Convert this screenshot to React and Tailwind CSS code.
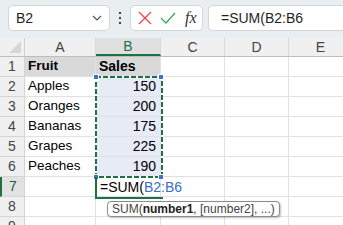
import React from 'react'

const cols = ['A', 'B', 'C', 'D', 'E']
const widths = ['w-[71px]', 'w-[65px]', 'w-[64px]', 'w-[64px]', 'w-[64px]']

const rows = [
  { n: 1, a: 'Fruit', b: 'Sales', head: true },
  { n: 2, a: 'Apples', b: '150' },
  { n: 3, a: 'Oranges', b: '200' },
  { n: 4, a: 'Bananas', b: '175' },
  { n: 5, a: 'Grapes', b: '225' },
  { n: 6, a: 'Peaches', b: '190' },
  { n: 7, a: '', b: '', active: true },
  { n: 8, a: '', b: '' },
  { n: 9, a: '', b: '' },
]

function Handle({ className }) {
  return <div className={`absolute w-[6px] h-[6px] bg-[#3b74c9] border border-white ${className}`} />
}

export default function App() {
  return (
    <div className="w-[343px] h-[225px] overflow-hidden bg-white relative" style={{ fontFamily: '"Liberation Sans", Arial, sans-serif' }}>
      {/* formula bar */}
      <div className="h-[38px] bg-[#e9eef0] flex items-start pt-[5px] pl-[8px]">
        <div className="w-[102px] h-[26px] shrink-0 bg-white border border-[#d3d7db] rounded-[5px] flex items-center justify-between pl-[7px] pr-[7px]">
          <span className="text-[14px] text-[#1f1f1f]">B2</span>
          <svg width="10" height="6" viewBox="0 0 10 6"><path d="M1 1l4 4 4-4" fill="none" stroke="#555" strokeWidth="1.2" /></svg>
        </div>
        <div className="w-[20px] h-[26px] shrink-0 flex flex-col items-center justify-center gap-[3px]">
          <span className="w-[2px] h-[2px] bg-[#444]" />
          <span className="w-[2px] h-[2px] bg-[#444]" />
          <span className="w-[2px] h-[2px] bg-[#444]" />
        </div>
        <div className="w-[73px] h-[26px] shrink-0 bg-white border border-[#d3d7db] rounded-[5px] flex items-center pl-[7px]">
          <svg width="14" height="14" viewBox="0 0 14 14"><path d="M1 1l12 12M13 1L1 13" stroke="#e5484d" strokeWidth="1.3" /></svg>
          <svg className="ml-[8px]" width="16" height="12" viewBox="0 0 16 12"><path d="M1 6l5 5L15 1" fill="none" stroke="#3fa45b" strokeWidth="1.3" /></svg>
          <span className="ml-[9px] text-[16px] italic text-[#333] leading-none" style={{ fontFamily: '"Liberation Serif", serif' }}>fx</span>
        </div>
        <div className="ml-[5px] flex-1 h-[26px] bg-white border border-r-0 border-[#d3d7db] rounded-l-[5px] flex items-center pl-[12px]">
          <span className="text-[14px] text-[#1f1f1f]">=SUM(B2:B6</span>
        </div>
      </div>

      {/* grid */}
      <div className="relative">
        <div className="flex h-[19px] bg-[#f0f0f0] border-b border-[#bdbdbd]">
          <div className="w-[25px] shrink-0 border-r border-[#d0d0d0] relative">
            <svg className="absolute right-[3px] bottom-[3px]" width="12" height="12" viewBox="0 0 12 12"><path d="M12 0V12H0Z" fill="#d6d6d6" /></svg>
          </div>
          {cols.map((c, i) => (
            <div
              key={c}
              className={`${widths[i]} shrink-0 border-r border-[#d8d8d8] flex items-center justify-center text-[14px] ${c === 'B' ? 'bg-[#e0e0e0] text-[#1e7145] border-b-2 border-b-[#1e7145]' : 'text-[#444]'}`}
            >
              {c}
            </div>
          ))}
        </div>
        {rows.map(r => (
          <div key={r.n} className="flex h-[20px]">
            <div className={`w-[25px] shrink-0 border-r border-b border-[#d4d4d4] flex items-center justify-center text-[14px] ${r.active ? 'bg-[#e2e2e2] text-[#1e5e3a] border-l-2 border-l-[#1e7145]' : 'bg-[#f0f0f0] text-[#444]'}`}>
              {r.n}
            </div>
            <div className={`w-[71px] shrink-0 border-r border-b border-[#e1e1e1] flex items-center pl-[3px] text-[13.5px] text-black ${r.head ? 'bg-[#d9d9d9] font-bold' : ''}`}>
              {r.a}
            </div>
            <div className={`w-[65px] shrink-0 border-r border-b border-[#e1e1e1] flex items-center text-[14px] text-black ${r.head ? 'bg-[#d9d9d9] font-bold pl-[3px] text-[13.5px]' : r.b ? 'bg-[#e6ebf5] justify-end pr-[4px]' : ''}`}>
              {r.b}
            </div>
            <div className="w-[64px] shrink-0 border-r border-b border-[#e1e1e1]" />
            <div className="w-[64px] shrink-0 border-r border-b border-[#e1e1e1]" />
            <div className="w-[64px] shrink-0 border-r border-b border-[#e1e1e1]" />
          </div>
        ))}

        {/* marching ants around B2:B6 */}
        <svg className="absolute left-[95px] top-[38px]" width="68" height="102" viewBox="0 0 68 102">
          <rect x="1" y="1" width="66" height="100" fill="none" stroke="#ffffff" strokeWidth="2" />
          <rect x="1" y="1" width="66" height="100" fill="none" stroke="#1e7145" strokeWidth="2" strokeDasharray="5 2" />
        </svg>
        <Handle className="left-[93px] top-[36px]" />
        <Handle className="left-[158px] top-[36px]" />
        <Handle className="left-[93px] top-[136px]" />
        <Handle className="left-[158px] top-[136px]" />

        {/* active cell editor B7 */}
        <div className="absolute left-[95px] top-[139px] w-[68px] h-[22px] border-l-2 border-b-2 border-[#1e7145] flex items-center pl-[3px] text-[14px] text-black">
          <span>=SUM(</span>
          <span className="text-[#3a6fc4]">B2:B6</span>
          <span className="w-px h-[16px] bg-black ml-px" />
        </div>

        {/* tooltip */}
        <div className="absolute left-[107px] top-[163px] h-[16px] px-[4px] bg-white border border-[#8a8a8a] rounded-[4px] shadow-[1px_1px_2px_rgba(0,0,0,0.25)] flex items-center text-[12px] text-[#444] whitespace-nowrap">
          SUM(<b className="text-[#222]">number1</b>, [number2], ...)
        </div>
      </div>
    </div>
  )
}
